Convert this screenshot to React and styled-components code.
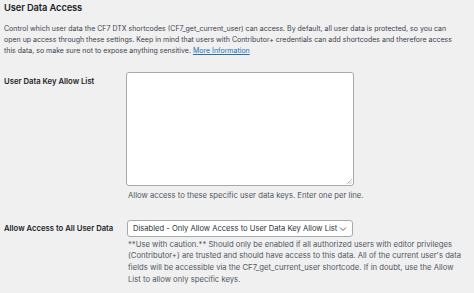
import React from 'react'
import styled, { createGlobalStyle } from 'styled-components'

const Global = createGlobalStyle`
  html, body {
    margin: 0;
    padding: 0;
    background: #f0f0f1;
  }
  body {
    font-family: Inter, "Noto Sans", sans-serif;
    color: #3c434a;
  }
`

const Wrap = styled.div`
  width: 474px;
  height: 293px;
  padding: 1px 4px 0 4px;
  box-sizing: border-box;
  overflow: hidden;
`

const Title = styled.h2`
  margin: 0;
  font-size: 9.3px;
  line-height: 14px;
  font-weight: 600;
  letter-spacing: -0.1px;
  color: #1d2327;
`

const Intro = styled.p`
  margin: 7.5px 0 0 0;
  font-size: 7px;
  line-height: 11px;
  color: #3c434a;
  white-space: nowrap;
`

const Link = styled.a`
  color: #2271b1;
  text-decoration: underline;
`

const Table = styled.div`
  display: grid;
  grid-template-columns: 122px 1fr;
  margin-top: 16.5px;
  row-gap: 18.5px;
`

const Label = styled.div`
  font-size: 7.7px;
  line-height: 11px;
  font-weight: 600;
  color: #1d2327;
  padding-top: ${p => p.$top || 0}px;
`

const Field = styled.div`
  display: flex;
  flex-direction: column;
  align-items: flex-start;
`

const Area = styled.div`
  position: relative;
  width: 228px;
  height: 114px;
  box-sizing: border-box;
  background: #fff;
  border: 1px solid #a7aaad;
  border-radius: 3px;
`

const Grip = styled.svg`
  position: absolute;
  right: 1px;
  bottom: 1px;
`

const Help = styled.p`
  margin: ${p => p.$top || 0}px 0 0 2px;
  font-size: 7.7px;
  line-height: 11.7px;
  color: #50575e;
  white-space: nowrap;
`

const Select = styled.div`
  display: flex;
  align-items: center;
  justify-content: space-between;
  width: 226px;
  height: 17px;
  margin-left: 1px;
  box-sizing: border-box;
  padding: 0 5px 0 5px;
  background: #fff;
  border: 1px solid #a7aaad;
  border-radius: 3px;
  font-size: 7.6px;
  color: #2c3338;
  white-space: nowrap;
`

const App = () => (
  <>
    <Global />
    <Wrap>
      <Title>User Data Access</Title>
      <Intro>
        Control which user data the CF7 DTX shortcodes (CF7_get_current_user) can access. By default, all user data is protected, so you can<br />
        open up access through these settings. Keep in mind that users with Contributor+ credentials can add shortcodes and therefore access<br />
        this data, so make sure not to expose anything sensitive. <Link href="#">More Information</Link>
      </Intro>
      <Table>
        <Label $top={3.5}>User Data Key Allow List</Label>
        <Field>
          <Area>
            <Grip width="6" height="6" viewBox="0 0 6 6">
              <path d="M6 1 L1 6 M6 3.5 L3.5 6" stroke="#a7aaad" strokeWidth="0.8" />
            </Grip>
          </Area>
          <Help $top={4}>Allow access to these specific user data keys. Enter one per line.</Help>
        </Field>
        <Label $top={2.5}>Allow Access to All User Data</Label>
        <Field>
          <Select>
            <span>Disabled - Only Allow Access to User Data Key Allow List</span>
            <svg width="8" height="6" viewBox="0 0 8 6">
              <path d="M1 1.5 L4 4.5 L7 1.5" fill="none" stroke="#50575e" strokeWidth="0.9" />
            </svg>
          </Select>
          <Help $top={1.5}>
            **Use with caution.** Should only be enabled if all authorized users with editor privileges<br />
            (Contributor+) are trusted and should have access to this data. All of the current user's data<br />
            fields will be accessible via the CF7_get_current_user shortcode. If in doubt, use the Allow<br />
            List to allow only specific keys.
          </Help>
        </Field>
      </Table>
    </Wrap>
  </>
)

export default App
